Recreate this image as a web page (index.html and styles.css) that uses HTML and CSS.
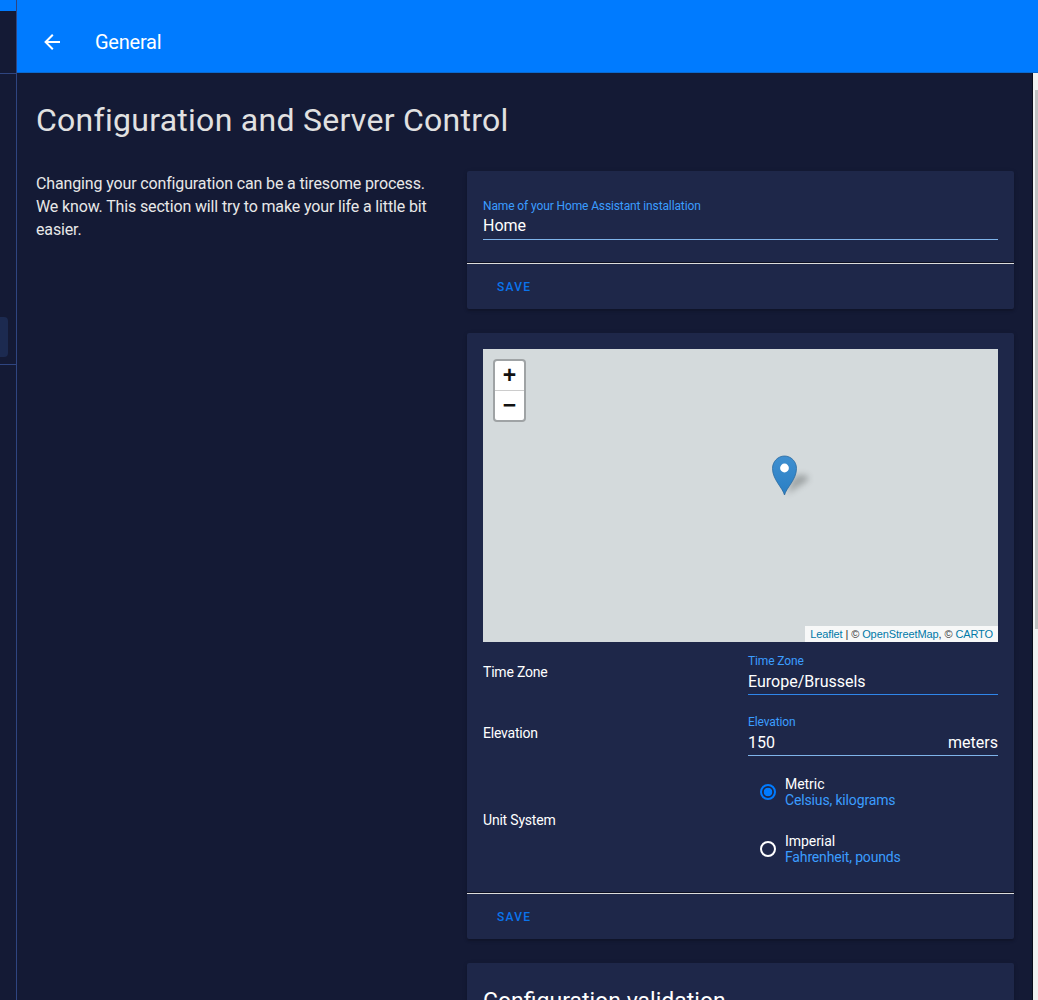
FILE: index.html
```html
<!DOCTYPE html>
<html lang="en">
<head>
<meta charset="utf-8">
<title>General</title>
<link rel="stylesheet" href="styles.css">
</head>
<body>
<div class="app">
  <aside class="sidebar">
    <div class="side-top"></div>
    <div class="side-nav"><div class="side-active"></div></div>
    <div class="side-rest"></div>
  </aside>
  <div class="main">
    <header class="toolbar">
      <svg class="back" viewBox="0 0 24 24" width="24" height="24"><path d="M20 11v2H8l5.5 5.5-1.42 1.42L4.16 12l7.92-7.92L13.5 5.5 8 11h12z"/></svg>
      <div class="toolbar-title">General</div>
    </header>
    <div class="body-row">
      <main class="content">
        <h1 class="page-title">Configuration and Server Control</h1>
        <div class="columns">
          <p class="intro">Changing your configuration can be a tiresome process. We know. This section will try to make your life a little bit easier.</p>
          <div class="cards">
            <section class="card">
              <div class="card-pad name-pad">
                <div class="field">
                  <div class="field-label">Name of your Home Assistant installation</div>
                  <div class="field-value name-value">Home</div>
                </div>
              </div>
              <div class="card-actions"><span class="save">SAVE</span></div>
            </section>
            <section class="card">
              <div class="card-pad core-pad">
                <div class="map">
                  <div class="zoom">
                    <div class="zoom-btn zoom-in">+</div>
                    <div class="zoom-btn">−</div>
                  </div>
                  <svg class="pin" viewBox="0 0 60 55" width="60" height="55">
                    <defs><filter id="blur" x="-40%" y="-40%" width="180%" height="180%"><feGaussianBlur stdDeviation="3"/></filter>
                    <linearGradient id="pinfill" x1="0" y1="0" x2="0" y2="1"><stop offset="0" stop-color="#3f8fd0"/><stop offset="1" stop-color="#2a7fc4"/></linearGradient></defs>
                    <path d="M16 45 L36 32 Q40 27 33 26 Q25 25 21 31 Z" fill="#5c6060" opacity=".45" filter="url(#blur)"/>
                    <path d="M13.5 46 C11.5 38.5 1.5 30.5 1.5 19.5 C1.5 12.5 7 7 13.5 7 C20 7 25.5 12.5 25.5 19.5 C25.5 30.5 15.5 38.5 13.5 46 Z" fill="url(#pinfill)" stroke="#2a6a9f" stroke-width=".8"/>
                    <circle cx="13.5" cy="19" r="4.4" fill="#fff"/>
                  </svg>
                  <div class="attribution"><span class="attr-link">Leaflet</span> | © <span class="attr-link">OpenStreetMap</span>, © <span class="attr-link">CARTO</span></div>
                </div>
                <div class="form-row tz-row">
                  <div class="row-label field-side">Time Zone</div>
                  <div class="field row-field tz-field">
                    <div class="field-label">Time Zone</div>
                    <div class="field-value">Europe/Brussels</div>
                  </div>
                </div>
                <div class="form-row el-row">
                  <div class="row-label field-side">Elevation</div>
                  <div class="field row-field el-field">
                    <div class="field-label">Elevation</div>
                    <div class="field-value value-split"><span>150</span><span>meters</span></div>
                  </div>
                </div>
                <div class="form-row unit-row">
                  <div class="row-label">Unit System</div>
                  <div class="radios">
                    <div class="radio-item">
                      <span class="radio radio-on"></span>
                      <div><div class="radio-name">Metric</div><div class="radio-sub">Celsius, kilograms</div></div>
                    </div>
                    <div class="radio-item">
                      <span class="radio"></span>
                      <div><div class="radio-name">Imperial</div><div class="radio-sub">Fahrenheit, pounds</div></div>
                    </div>
                  </div>
                </div>
              </div>
              <div class="card-actions"><span class="save">SAVE</span></div>
            </section>
            <section class="card">
              <div class="card-pad"><h2 class="card-title">Configuration validation</h2></div>
            </section>
          </div>
        </div>
      </main>
      <div class="scrollbar"><div class="thumb"></div></div>
    </div>
  </div>
</div>
</body>
</html>
```
FILE: styles.css
```css
* { box-sizing: border-box; }
html, body { margin: 0; height: 1000px; overflow: hidden; background: #141a35; }
body { font-family: Roboto, "Liberation Sans", sans-serif; color: #e1e1e1; }
.app { display: flex; height: 1000px; }
.sidebar { width: 17px; flex: none; background: #141a35; border-right: 1px solid #2f4580; display: flex; flex-direction: column; }
.side-top { height: 74px; flex: none; border-top: 11px solid #007bff; border-bottom: 1px solid #2f4580; }
.side-nav { height: 291px; flex: none; border-bottom: 1px solid #2f4580; padding-top: 243px; }
.side-active { width: 8px; height: 40px; background: #1c2a50; border-radius: 0 4px 4px 0; }
.side-rest { flex: 1; }
.main { flex: 1; min-width: 0; display: flex; flex-direction: column; }
.toolbar { height: 73px; flex: none; background: #007bff; border-bottom: 1px solid #0a6ad0; display: flex; align-items: center; padding: 12px 0 0 24px; color: #fff; }
.back { fill: #fff; flex: none; margin-left: -1px; }
.toolbar-title { margin-left: 31px; font-size: 20px; letter-spacing: -.25px; font-weight: 400; color: #fff; }
.body-row { flex: 1; display: flex; min-height: 0; }
.content { flex: 1; min-width: 0; padding: 0 18px 0 19px; overflow: hidden; }
.scrollbar { width: 6px; flex: none; background: #f1f1f1; border-left: 1px solid #0b0e1c; }
.thumb { height: 539px; margin: 17px 0 0 2px; background: #c1c1c1; }
.page-title { margin: 0; padding-top: 27px; height: 98px; font-size: 32px; letter-spacing: .27px; line-height: 40px; font-weight: 400; color: #e1e1e1; }
.columns { display: flex; }
.intro { width: 431px; flex: none; margin: 0; font-size: 16px; letter-spacing: -.14px; line-height: 23px; color: #e8e8e8; padding: 1px 30px 0 0; }
.cards { flex: 1; min-width: 0; display: flex; flex-direction: column; gap: 24px; }
.card { background: #1e2749; border-radius: 2px; box-shadow: 0 2px 2px rgba(0,0,0,.14), 0 1px 5px rgba(0,0,0,.12); }
.card-pad { padding: 16px; }
.name-pad { height: 91px; padding-top: 28px; }
.core-pad { height: 559px; }
.field { border-bottom: 1px solid #7fb4ea; }
.field-label { font-size: 12px; letter-spacing: -.12px; line-height: 14px; color: #3b9dff; }
.field-value { font-size: 16px; line-height: 24px; height: 24px; margin-top: 2px; color: #fff; }
.name-value { margin-top: 1px; height: 25px; }
.value-split { display: flex; justify-content: space-between; }
.card-actions { height: 47px; border-top: 1px solid #0c0f20; box-shadow: inset 0 1px 0 #dcdcdc; padding: 2px 0 0 30px; display: flex; align-items: center; }
.save { font-size: 12px; font-weight: 500; letter-spacing: 1.25px; color: #0a74ec; }
.map { position: relative; height: 293px; background: #d4dadc; }
.zoom { position: absolute; left: 10px; top: 10px; width: 33px; border: 2px solid rgba(0,0,0,.25); border-radius: 4px; background: #fff; background-clip: padding-box; }
.zoom-btn { height: 29px; display: flex; align-items: center; justify-content: center; font-family: "Liberation Sans", Arial, sans-serif; font-size: 23px; font-weight: 700; line-height: 1; color: #111; }
.zoom-in { height: 30px; border-bottom: 1px solid #ccc; }
.pin { position: absolute; left: 288px; top: 100px; }
.attribution { position: absolute; right: 0; bottom: 0; background: rgba(255,255,255,.8); padding: 1px 5px 0; font-family: "Liberation Sans", Arial, sans-serif; font-size: 11px; letter-spacing: -.1px; line-height: 15px; color: #333; }
.attr-link { color: #0078a8; }
.form-row { display: flex; align-items: center; justify-content: space-between; }
.row-label { font-size: 14px; letter-spacing: -.2px; color: #fff; }
.field-side { margin-bottom: 6px; }
.row-field { width: 250px; }
.tz-row { margin-top: 12px; }
.tz-field { border-bottom-color: #2f86ea; }
.el-row { margin-top: 20px; }
.unit-row { margin-top: 8px; height: 112px; }
.radios { width: 250px; display: flex; flex-direction: column; gap: 15px; padding-left: 10px; margin-top: 2px; }
.radio-item { display: flex; align-items: center; gap: 9px; height: 42px; }
.radio { width: 16px; height: 16px; border: 2px solid #fff; border-radius: 50%; flex: none; margin: -2px 0 0 2px; }
.radio-on { border-color: #007bff; background: radial-gradient(circle, #007bff 0 4px, transparent 4.6px); }
.radio-name { font-size: 14px; line-height: 16px; letter-spacing: -.05px; color: #fff; }
.radio-sub { font-size: 14px; line-height: 17px; letter-spacing: -.15px; color: #3b9dff; }
.card-title { margin: 0; padding-top: 7px; font-size: 23px; line-height: 32px; font-weight: 400; color: #fff; }
```
